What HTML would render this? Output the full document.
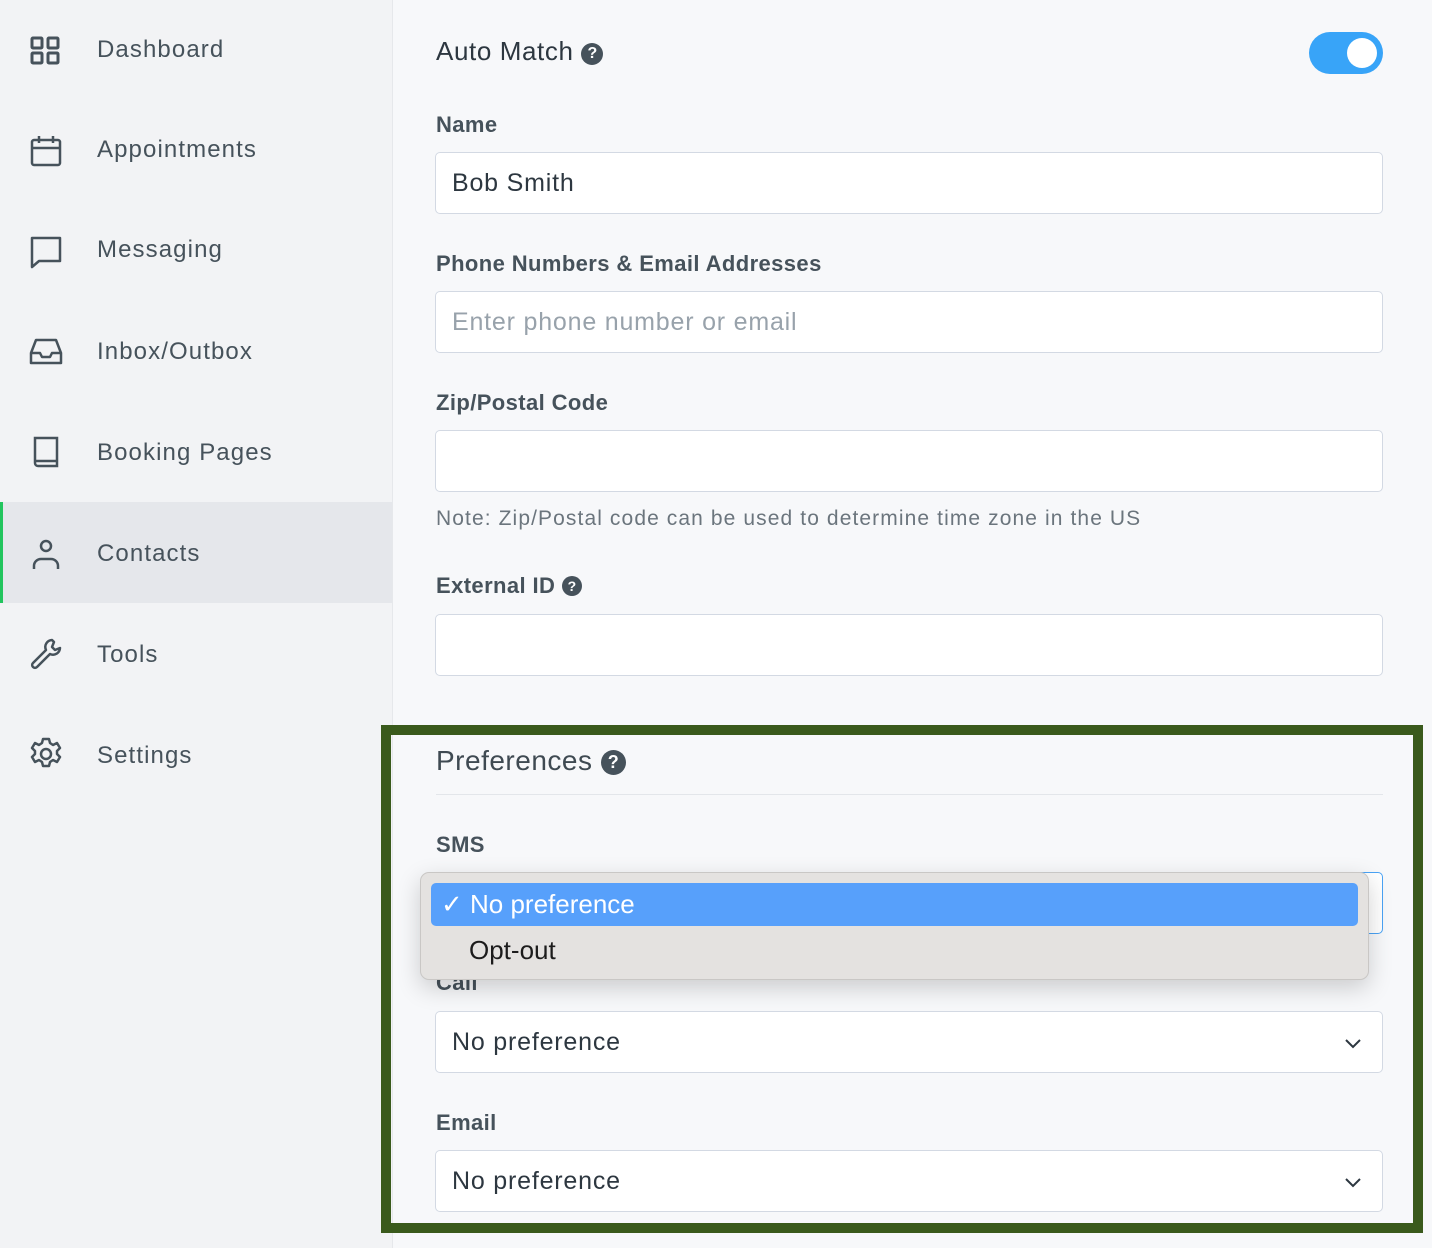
<!DOCTYPE html>
<html><head><style>
*{box-sizing:border-box;margin:0;padding:0}
body{width:1432px;height:1248px;overflow:hidden;background:#f7f8fa;font-family:"Liberation Sans",sans-serif;color:#3f4a52;position:relative}
.side{position:absolute;left:0;top:0;width:393px;height:1248px;background:#f2f3f5;border-right:1px solid #e6e8eb}
.nav{position:absolute;left:0;width:392px;height:101px;display:flex;align-items:center}
.nav svg{position:absolute;left:28px;width:36px;height:36px}
.nav span{position:absolute;left:97px;font-size:24px;color:#46525b;letter-spacing:1.1px;margin-top:3px}
.nav.act{background:#e5e7eb;border-left:3px solid #22c55e}
.lbl{position:absolute;left:436px;font-size:22px;font-weight:bold;color:#46525b;letter-spacing:0.4px}
.inp{position:absolute;left:435px;width:948px;height:62px;background:#fff;border:1px solid #d3d9e3;border-radius:5px;font-size:25px;padding-left:16px;line-height:60px;color:#2d3740;letter-spacing:0.8px}
.q{display:inline-block;width:22px;height:22px;border-radius:50%;background:#46525b;color:#fff;font-size:16px;font-weight:bold;text-align:center;line-height:22px;vertical-align:2px;letter-spacing:0}
.chev{position:absolute;right:20px;top:22px}
</style></head><body>
<div class="side">
<div class="nav" style="top:0"><svg viewBox="0 0 36 36" fill="none" stroke="#46525b" stroke-width="3"><rect x="4" y="5" width="10" height="10" rx="1"/><rect x="20" y="5" width="10" height="10" rx="1"/><rect x="4" y="20" width="10" height="10" rx="1"/><rect x="20" y="20" width="10" height="10" rx="1"/></svg><span style="top:33px">Dashboard</span></div>
<div class="nav" style="top:100px"><svg viewBox="0 0 36 36" fill="none" stroke="#46525b" stroke-width="2.5"><rect x="4" y="7" width="28" height="25" rx="2"/><path d="M4 15h28M11 3v7M25 3v7"/></svg><span style="top:33px">Appointments</span></div>
<div class="nav" style="top:200px"><svg viewBox="0 0 36 36" fill="none" stroke="#46525b" stroke-width="2.5"><path d="M4 5h28v23H11l-7 6z" stroke-linejoin="round"/></svg><span style="top:33px">Messaging</span></div>
<div class="nav" style="top:300px"><svg viewBox="0 0 36 36" fill="none" stroke="#46525b" stroke-width="2.5" stroke-linejoin="round"><path d="M3 20l5-13h20l5 13v10H3z"/><path d="M3 20h9l2 4h8l2-4h9"/></svg><span style="top:35px">Inbox/Outbox</span></div>
<div class="nav" style="top:401px"><svg viewBox="0 0 36 36" fill="none" stroke="#46525b" stroke-width="2.5"><path d="M7 4h22v28H10a3 3 0 0 1-3-3z"/><path d="M7 27h22"/></svg><span style="top:35px">Booking Pages</span></div>
<div class="nav act" style="top:502px"><svg viewBox="0 0 36 36" fill="none" stroke="#46525b" stroke-width="2.5" style="left:25px"><circle cx="18" cy="11" r="5"/><path d="M6 34v-3a7 7 0 0 1 7-7h10a7 7 0 0 1 7 7v3"/></svg><span style="top:35px;left:94px">Contacts</span></div>
<div class="nav" style="top:603px"><svg viewBox="0 0 36 36" fill="none" stroke="#46525b" stroke-width="2.5" stroke-linejoin="round"><path d="M24 4a7 7 0 0 0-6 10L5 27a2.5 2.5 0 0 0 4 4l13-13a7 7 0 0 0 10-6l-5 2-3-3 2-5z"/></svg><span style="top:35px">Tools</span></div>
<div class="nav" style="top:703px"><svg viewBox="0 0 36 36" fill="none" stroke="#46525b" stroke-width="2.5" stroke-linejoin="round"><path d="M15 3h6l1 4 3 2 4-2 3 5-3 3v3l3 3-3 5-4-2-3 2-1 4h-6l-1-4-3-2-4 2-3-5 3-3v-3l-3-3 3-5 4 2 3-2z"/><circle cx="18" cy="18" r="5"/></svg><span style="top:36px">Settings</span></div>
</div>

<div style="position:absolute;left:436px;top:36px;font-size:26px;color:#2d3740;letter-spacing:0.6px">Auto Match <span class="q">?</span></div>
<div style="position:absolute;left:1309px;top:32px;width:74px;height:42px;border-radius:21px;background:#38a4f8"><div style="position:absolute;right:6px;top:6px;width:30px;height:30px;border-radius:50%;background:#fff"></div></div>

<div class="lbl" style="top:112px">Name</div>
<div class="inp" style="top:152px">Bob Smith</div>
<div class="lbl" style="top:251px">Phone Numbers &amp; Email Addresses</div>
<div class="inp" style="top:291px;color:#98a2ab">Enter phone number or email</div>
<div class="lbl" style="top:390px">Zip/Postal Code</div>
<div class="inp" style="top:430px"></div>
<div style="position:absolute;left:436px;top:507px;font-size:21px;color:#6b757d;letter-spacing:1.1px">Note: Zip/Postal code can be used to determine time zone in the US</div>
<div class="lbl" style="top:573px">External ID <span class="q" style="width:20px;height:20px;line-height:20px;font-size:14px">?</span></div>
<div class="inp" style="top:614px"></div>

<div style="position:absolute;left:381px;top:725px;width:1042px;height:508px;border:10px solid #3a5a1c"></div>
<div style="position:absolute;left:436px;top:745px;font-size:28px;color:#3f4a52;letter-spacing:0.5px">Preferences <span class="q" style="width:25px;height:25px;line-height:25px;font-size:18px">?</span></div>
<div style="position:absolute;left:436px;top:794px;width:947px;height:1px;background:#e3e6ea"></div>
<div class="lbl" style="top:832px">SMS</div>
<div class="inp" style="top:872px;border-color:#4aa3f5"></div>
<div class="lbl" style="top:970px">Call</div>
<div class="inp" style="top:1011px">No preference<svg class="chev" width="18" height="18" viewBox="0 0 18 18"><path d="M2 6l7 7 7-7" fill="none" stroke="#2d3740" stroke-width="2"/></svg></div>
<div class="lbl" style="top:1110px">Email</div>
<div class="inp" style="top:1150px">No preference<svg class="chev" width="18" height="18" viewBox="0 0 18 18"><path d="M2 6l7 7 7-7" fill="none" stroke="#2d3740" stroke-width="2"/></svg></div>

<div style="position:absolute;left:420px;top:872px;width:949px;height:108px;background:#e4e2e0;border:1px solid #c9c7c5;border-radius:9px;box-shadow:0 8px 24px rgba(0,0,0,.18)">
<div style="position:absolute;left:10px;top:10px;width:927px;height:43px;background:#57a0fb;border-radius:5px;color:#fff;font-size:26px;line-height:43px;padding-left:10px">✓ No preference</div>
<div style="position:absolute;left:48px;top:58px;font-size:26px;line-height:38px;color:#1c1c1c">Opt-out</div>
</div>
</body></html>
